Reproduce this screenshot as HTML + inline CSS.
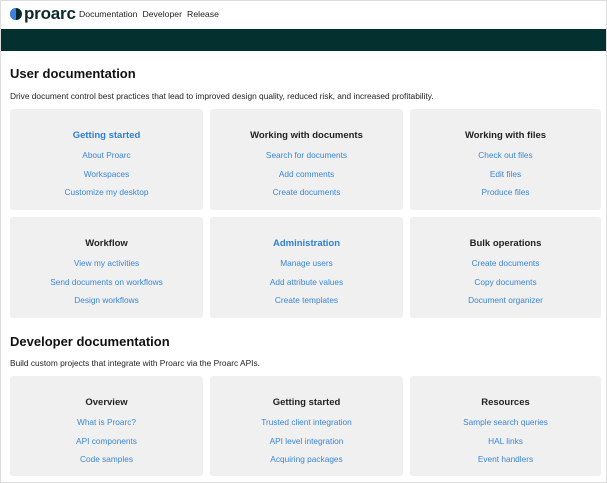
<!DOCTYPE html>
<html><head><style>
*{margin:0;padding:0;box-sizing:border-box}
body{width:607px;height:483px;background:#fff;font-family:"Liberation Sans",Arial,sans-serif;position:relative;overflow:hidden}
.frame{position:absolute;left:0;top:0;width:607px;height:483px;border:1px solid #ddd;pointer-events:none}
.logo{position:absolute;left:24px;top:4px;font-size:17px;font-weight:bold;color:#0d2a2a;letter-spacing:-0.2px;line-height:20px}
.dot{position:absolute;left:10px;top:8px;width:12px;height:12px;border-radius:50%;background:#0d2a2a;overflow:hidden}
.dot:before{content:"";position:absolute;left:0;top:0;width:6px;height:12px;background:#3b82e0}
nav{position:absolute;left:79px;top:9px;font-size:8.7px;color:#222}
nav span{margin-right:5px}
.band{position:absolute;left:0;top:29px;width:607px;height:22px;background:#04302f}
h2{position:absolute;left:10px;font-size:13px;font-weight:bold;color:#111}
p.s{position:absolute;left:10px;font-size:8.35px;color:#222}
.c{position:absolute;width:193px;background:#f0f0f0;border-radius:3px;text-align:center}
.c b{display:block;font-size:9.5px;color:#222;margin-top:21px;height:20px}
.c b.l{color:#2d7fd8}
.c a{display:block;font-size:8.3px;color:#3a86d6;height:18.5px;text-decoration:none}
</style></head><body>
<div class="dot"></div><div class="logo">proarc</div>
<nav><span>Documentation</span><span>Developer</span><span>Release</span></nav>
<div class="band"></div>
<h2 style="top:66px">User documentation</h2>
<p class="s" style="top:91px">Drive document control best practices that lead to improved design quality, reduced risk, and increased profitability.</p>
<div class="c" style="left:10px;top:109px;height:101px"><b class="l">Getting started</b><a>About Proarc</a><a>Workspaces</a><a>Customize my desktop</a></div>
<div class="c" style="left:210px;top:109px;height:101px"><b>Working with documents</b><a>Search for documents</a><a>Add comments</a><a>Create documents</a></div>
<div class="c" style="left:410px;top:109px;height:101px;width:191px"><b>Working with files</b><a>Check out files</a><a>Edit files</a><a>Produce files</a></div>
<div class="c" style="left:10px;top:217px;height:101px"><b>Workflow</b><a>View my activities</a><a>Send documents on workflows</a><a>Design workflows</a></div>
<div class="c" style="left:210px;top:217px;height:101px"><b class="l">Administration</b><a>Manage users</a><a>Add attribute values</a><a>Create templates</a></div>
<div class="c" style="left:410px;top:217px;height:101px;width:191px"><b>Bulk operations</b><a>Create documents</a><a>Copy documents</a><a>Document organizer</a></div>
<h2 style="top:334px">Developer documentation</h2>
<p class="s" style="top:358px">Build custom projects that integrate with Proarc via the Proarc APIs.</p>
<div class="c" style="left:10px;top:376px;height:100px"><b>Overview</b><a>What is Proarc?</a><a>API components</a><a>Code samples</a></div>
<div class="c" style="left:210px;top:376px;height:100px"><b>Getting started</b><a>Trusted client integration</a><a>API level integration</a><a>Acquiring packages</a></div>
<div class="c" style="left:410px;top:376px;height:100px;width:191px"><b>Resources</b><a>Sample search queries</a><a>HAL links</a><a>Event handlers</a></div>
<div class="frame"></div>
</body></html>
